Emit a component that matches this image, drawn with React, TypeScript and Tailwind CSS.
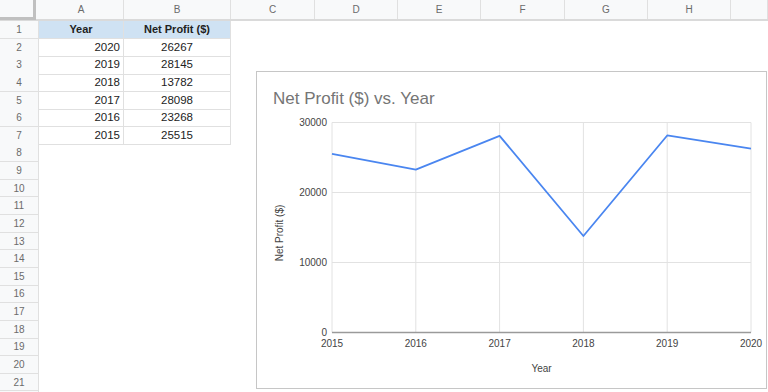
const COLS = ["A", "B", "C", "D", "E", "F", "G", "H", ""];

const data: [number, number][] = [
  [2020, 26267],
  [2019, 28145],
  [2018, 13782],
  [2017, 28098],
  [2016, 23268],
  [2015, 25515],
];

const gridCols =
  "grid grid-cols-[39px_85px_107px_84px_83px_83px_84px_83px_83px_1fr]";

// plot area inside the chart box
const PL = 75;
const PR = 494;
const PT = 50.5;
const PB = 260.5;
const years = [2015, 2016, 2017, 2018, 2019, 2020];
const xOf = (i: number) => PL + ((PR - PL) / 5) * i;
const yOf = (v: number) => PB - (v / 30000) * (PB - PT);

function Chart() {
  const points = [...data]
    .sort((a, b) => a[0] - b[0])
    .map(([yr, v]) => `${xOf(yr - 2015)},${yOf(v)}`)
    .join(" ");

  return (
    <div className="absolute left-[256px] top-[71px] w-[511px] h-[318px] border border-[#c6c6c6] bg-white">
      <svg width="509" height="316" className="block">
        <text
          x="16"
          y="32"
          fontSize="17"
          fill="#757575"
          fontFamily="'Liberation Sans', Arial, sans-serif"
        >
          Net Profit ($) vs. Year
        </text>

        {/* gridlines */}
        {[30000, 20000, 10000].map((v) => (
          <line
            key={v}
            x1={PL}
            x2={PR}
            y1={yOf(v)}
            y2={yOf(v)}
            stroke="#e2e2e2"
            strokeWidth="1"
          />
        ))}
        {years.map((yr, i) => (
          <line
            key={yr}
            x1={xOf(i)}
            x2={xOf(i)}
            y1={PT}
            y2={PB}
            stroke="#e2e2e2"
            strokeWidth="1"
          />
        ))}
        <line x1={PL} x2={PR} y1={PB} y2={PB} stroke="#9a9a9a" strokeWidth="1.6" />

        <polyline
          points={points}
          fill="none"
          stroke="#4a86f0"
          strokeWidth="1.8"
          strokeLinejoin="round"
        />

        <g fontFamily="'Liberation Sans', Arial, sans-serif" fontSize="10" fill="#444">
          {[30000, 20000, 10000, 0].map((v) => (
            <text key={v} x="70" y={yOf(v) + 3.5} textAnchor="end">
              {v}
            </text>
          ))}
          {years.map((yr, i) => (
            <text key={yr} x={xOf(i)} y="275" textAnchor="middle">
              {yr}
            </text>
          ))}
          <text x="284.5" y="300" textAnchor="middle">
            Year
          </text>
          <text
            x="0"
            y="0"
            textAnchor="middle"
            transform="translate(25.5 161) rotate(-90)"
          >
            Net Profit ($)
          </text>
        </g>
      </svg>
    </div>
  );
}

export default function App() {
  const rows = Array.from({ length: 22 }, (_, i) => i + 1);

  return (
    <div className="relative w-[768px] h-[392px] overflow-hidden bg-white font-['Liberation_Sans',Arial,sans-serif]">
      {/* column headers */}
      <div className={`${gridCols} h-[21px] bg-[#f8f9fa] border-b-2 border-[#dadada]`}>
        <div className="border-r-[3px] border-b-[3px] border-[#c0c0c0] -mb-[1px] mr-[3px]" />
        {COLS.map((c, i) => (
          <div
            key={i}
            className="flex items-center justify-center border-r border-[#e0e0e0] text-[10px] text-[#6b6b6b]"
          >
            {c}
          </div>
        ))}
      </div>

      {/* rows */}
      {rows.map((r) => {
        const item = r >= 2 && r <= 7 ? data[r - 2] : null;
        return (
          <div key={r} className={`${gridCols} h-[17.65px]`}>
            <div className="flex items-center justify-center bg-[#f8f9fa] border-r border-b border-[#e0e0e0] text-[10px] text-[#6b6b6b]">
              {r < 22 ? r : ""}
            </div>
            {r === 1 ? (
              <>
                <div className="flex items-center justify-center bg-[#cfe2f3] border-r border-b border-[#e0e0e0] text-[11px] font-bold text-[#222]">
                  Year
                </div>
                <div className="flex items-center justify-center bg-[#cfe2f3] border-r border-b border-[#e0e0e0] text-[11px] font-bold text-[#222]">
                  Net Profit ($)
                </div>
              </>
            ) : item ? (
              <>
                <div className="flex items-center justify-end pr-[3px] border-r border-b border-[#e0e0e0] text-[11.5px] text-[#222]">
                  {item[0]}
                </div>
                <div className="flex items-center justify-center border-r border-b border-[#e0e0e0] text-[11.5px] text-[#222]">
                  {item[1]}
                </div>
              </>
            ) : (
              <div className="col-span-2" />
            )}
            <div className="col-span-7" />
          </div>
        );
      })}

      <Chart />
    </div>
  );
}
